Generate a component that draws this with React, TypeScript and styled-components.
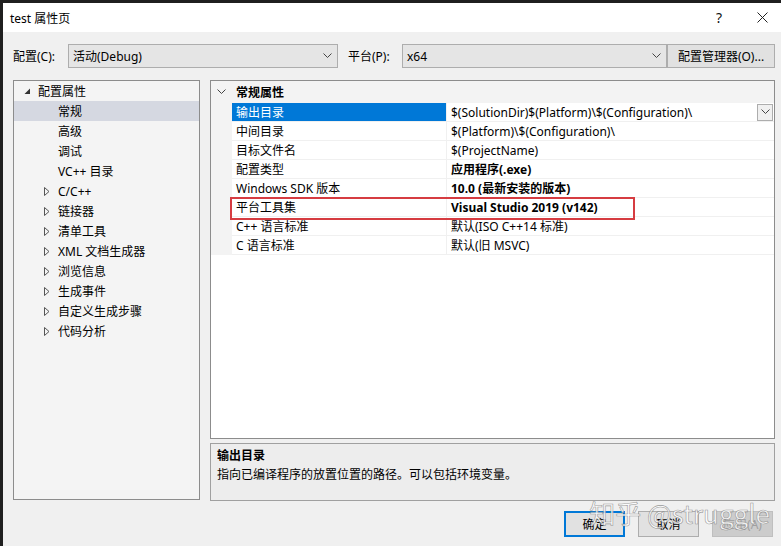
import React, { useState } from 'react'
import styled, { createGlobalStyle } from 'styled-components'

const GlobalStyle = createGlobalStyle`
  html, body {
    margin: 0;
    padding: 0;
    background: #1f1f1f;
  }
  body {
    font-family: 'Noto Sans', 'Noto Sans CJK SC', sans-serif;
    font-size: 12px;
    color: #000;
  }
`

const Window = styled.div`
  position: relative;
  margin: 3px 0 0 3px;
  height: 543px;
  display: flex;
  flex-direction: column;
  background: #f0f0f0;
  overflow: hidden;
`

const TitleBar = styled.div`
  height: 29px;
  background: #fff;
  display: flex;
  align-items: center;
  padding-left: 7px;
`

const Title = styled.span`
  flex: 1;
  font-size: 12px;
`

const TitleButton = styled.span<{ $width: number }>`
  width: ${({ $width }) => $width}px;
  display: flex;
  justify-content: center;
  font-size: 14px;
  color: #111;
`

const Body = styled.div`
  flex: 1;
  display: flex;
  flex-direction: column;
  padding: 12px 6px 0 10px;
`

const ConfigRow = styled.div`
  display: flex;
  align-items: center;
  height: 24px;
`

const Label = styled.span<{ $width: number; $indent?: number }>`
  width: ${({ $width }) => $width}px;
  padding-left: ${({ $indent }) => $indent || 0}px;
  flex-shrink: 0;
`

const Combo = styled.div<{ $width: number }>`
  width: ${({ $width }) => $width}px;
  height: 24px;
  box-sizing: border-box;
  border: 1px solid #adadad;
  background: #e5e5e5;
  display: flex;
  align-items: center;
  padding: 0 5px 0 4px;
  flex-shrink: 0;
`

const ComboText = styled.span`
  flex: 1;
`

const Chevron = styled.svg`
  width: 9px;
  height: 6px;
  flex-shrink: 0;
`

const Button = styled.button<{ $primary?: boolean; $disabled?: boolean }>`
  font: inherit;
  font-size: 12px;
  height: 24px;
  box-sizing: border-box;
  padding: 0 8px;
  background: ${({ $disabled }) => ($disabled ? '#cccccc' : '#e1e1e1')};
  color: ${({ $disabled }) => ($disabled ? '#a0a0a0' : '#000')};
  border: ${({ $primary, $disabled }) =>
    $primary ? '2px solid #0078d7' : $disabled ? '1px solid #bfbfbf' : '1px solid #adadad'};
  border-radius: 0;
`

const ManagerButton = styled(Button)`
  width: 110px;
`

const Main = styled.div`
  display: flex;
  gap: 10px;
  margin-top: 12px;
  height: 421px;
`

const TreePanel = styled.div`
  width: 187px;
  box-sizing: border-box;
  background: #f4f4f4;
  border: 1px solid #8c8c8c;
  height: 420px;
`

const TreeRow = styled.div<{ $selected?: boolean; $level: number }>`
  height: 20px;
  display: flex;
  align-items: center;
  padding-left: ${({ $level }) => ($level === 0 ? 10 : 30)}px;
  background: ${({ $selected }) => ($selected ? '#d5d8e1' : 'transparent')};
`

const Expander = styled.span`
  width: 14px;
  display: flex;
  align-items: center;
  flex-shrink: 0;
`

const RightColumn = styled.div`
  flex: 1;
  display: flex;
  flex-direction: column;
  gap: 4px;
`

const Grid = styled.div`
  position: relative;
  height: 359px;
  box-sizing: border-box;
  background: #fff;
  border: 1px solid #8c8c8c;
`

const CategoryRow = styled.div`
  height: 22px;
  display: flex;
  align-items: center;
  background: #f3f3f3;
  font-weight: bold;
`

const CategoryTitle = styled.span`
  padding-left: 4px;
`

const Gutter = styled.div`
  width: 21px;
  align-self: stretch;
  display: flex;
  align-items: center;
  justify-content: center;
  background: #f3f3f3;
  flex-shrink: 0;
`

const PropRow = styled.div`
  height: 19px;
  display: flex;
`

const NameCell = styled.div<{ $selected?: boolean }>`
  width: 214px;
  box-sizing: border-box;
  padding-left: 4px;
  display: flex;
  align-items: center;
  border-bottom: 1px solid #f0f0f0;
  background: ${({ $selected }) => ($selected ? '#0078d7' : '#fff')};
  color: ${({ $selected }) => ($selected ? '#fff' : '#000')};
`

const ValueCell = styled.div<{ $bold?: boolean }>`
  flex: 1;
  box-sizing: border-box;
  padding-left: 4px;
  display: flex;
  align-items: center;
  border-left: 1px solid #f0f0f0;
  border-bottom: 1px solid #f0f0f0;
  font-weight: ${({ $bold }) => ($bold ? 'bold' : 'normal')};
`

const ValueText = styled.span`
  flex: 1;
`

const DropButton = styled.span`
  width: 16px;
  height: 17px;
  box-sizing: border-box;
  border: 1px solid #adadad;
  background: #f0f0f0;
  display: flex;
  align-items: center;
  justify-content: center;
  margin-right: 1px;
`

// red annotation box drawn over the grid
const Highlight = styled.div`
  position: absolute;
  left: 19px;
  top: 116px;
  width: 405px;
  height: 23px;
  box-sizing: border-box;
  border: 2px solid #d63c41;
  pointer-events: none;
`

const Description = styled.div`
  height: 58px;
  box-sizing: border-box;
  border: 1px solid #a0a0a0;
  background: #ededed;
  padding: 2px 6px;
  line-height: 19px;
`

const DescTitle = styled.div`
  font-weight: bold;
`

const Footer = styled.div`
  display: flex;
  justify-content: flex-end;
  align-items: center;
  gap: 13px;
  padding: 10px 2px 0 0;
`

const FooterButton = styled(Button)`
  width: 61px;
  height: 26px;
`

const Watermark = styled.div`
  position: absolute;
  right: 11px;
  bottom: 15px;
  font-family: 'Noto Sans CJK SC', sans-serif;
  font-size: 26px;
  color: rgba(255, 255, 255, 0.8);
  -webkit-text-stroke: 0.6px rgba(120, 120, 120, 0.75);
  pointer-events: none;
`

const ChevronDown = () => (
  <Chevron viewBox="0 0 9 6">
    <path d="M0.5 0.5 L4.5 4.5 L8.5 0.5" fill="none" stroke="#444" strokeWidth="1" />
  </Chevron>
)

const treeItems: { label: string; level: number; expander?: 'open' | 'closed' }[] = [
  { label: '配置属性', level: 0, expander: 'open' },
  { label: '常规', level: 1 },
  { label: '高级', level: 1 },
  { label: '调试', level: 1 },
  { label: 'VC++ 目录', level: 1 },
  { label: 'C/C++', level: 1, expander: 'closed' },
  { label: '链接器', level: 1, expander: 'closed' },
  { label: '清单工具', level: 1, expander: 'closed' },
  { label: 'XML 文档生成器', level: 1, expander: 'closed' },
  { label: '浏览信息', level: 1, expander: 'closed' },
  { label: '生成事件', level: 1, expander: 'closed' },
  { label: '自定义生成步骤', level: 1, expander: 'closed' },
  { label: '代码分析', level: 1, expander: 'closed' },
]

const props: { name: string; value: string; bold?: boolean }[] = [
  { name: '输出目录', value: '$(SolutionDir)$(Platform)\\$(Configuration)\\' },
  { name: '中间目录', value: '$(Platform)\\$(Configuration)\\' },
  { name: '目标文件名', value: '$(ProjectName)' },
  { name: '配置类型', value: '应用程序(.exe)', bold: true },
  { name: 'Windows SDK 版本', value: '10.0 (最新安装的版本)', bold: true },
  { name: '平台工具集', value: 'Visual Studio 2019 (v142)', bold: true },
  { name: 'C++ 语言标准', value: '默认(ISO C++14 标准)' },
  { name: 'C 语言标准', value: '默认(旧 MSVC)' },
]

function TreeExpander({ kind }: { kind?: 'open' | 'closed' }) {
  if (!kind) return null
  if (kind === 'open') {
    return (
      <svg width="7" height="7" viewBox="0 0 7 7">
        <path d="M6 0.5 L6 6 L0.5 6 Z" fill="#333" />
      </svg>
    )
  }
  return (
    <svg width="6" height="9" viewBox="0 0 6 9">
      <path d="M0.5 0.5 L5 4.5 L0.5 8.5 Z" fill="none" stroke="#555" strokeWidth="1" />
    </svg>
  )
}

export default function App() {
  const [selectedProp, setSelectedProp] = useState(0)

  return (
    <>
      <GlobalStyle />
      <Window>
        <TitleBar>
          <Title>test 属性页</Title>
          <TitleButton $width={48}>?</TitleButton>
          <TitleButton $width={38}>
            <svg width="11" height="11" viewBox="0 0 11 11">
              <path d="M0.5 0.5 L10.5 10.5 M10.5 0.5 L0.5 10.5" stroke="#222" strokeWidth="1" />
            </svg>
          </TitleButton>
        </TitleBar>

        <Body>
          <ConfigRow>
            <Label $width={55}>配置(C):</Label>
            <Combo $width={270}>
              <ComboText>活动(Debug)</ComboText>
              <ChevronDown />
            </Combo>
            <Label $width={54} $indent={10}>
              平台(P):
            </Label>
            <Combo $width={265}>
              <ComboText>x64</ComboText>
              <ChevronDown />
            </Combo>
            <ManagerButton>配置管理器(O)...</ManagerButton>
          </ConfigRow>

          <Main>
            <TreePanel>
              {treeItems.map((item, i) => (
                <TreeRow key={i} $level={item.level} $selected={i === 1}>
                  <Expander>
                    <TreeExpander kind={item.expander} />
                  </Expander>
                  <span>{item.label}</span>
                </TreeRow>
              ))}
            </TreePanel>

            <RightColumn>
              <Grid>
                <CategoryRow>
                  <Gutter>
                    <ChevronDown />
                  </Gutter>
                  <CategoryTitle>常规属性</CategoryTitle>
                </CategoryRow>
                {props.map((p, i) => (
                  <PropRow key={p.name} onClick={() => setSelectedProp(i)}>
                    <Gutter />
                    <NameCell $selected={i === selectedProp}>{p.name}</NameCell>
                    <ValueCell $bold={p.bold}>
                      <ValueText>{p.value}</ValueText>
                      {i === selectedProp && (
                        <DropButton>
                          <ChevronDown />
                        </DropButton>
                      )}
                    </ValueCell>
                  </PropRow>
                ))}
                <Highlight />
              </Grid>
              <Description>
                <DescTitle>{props[selectedProp].name}</DescTitle>
                <div>指向已编译程序的放置位置的路径。可以包括环境变量。</div>
              </Description>
            </RightColumn>
          </Main>

          <Footer>
            <FooterButton $primary>确定</FooterButton>
            <FooterButton>取消</FooterButton>
            <FooterButton $disabled>应用(A)</FooterButton>
          </Footer>
        </Body>
        <Watermark>知乎 @struggle</Watermark>
      </Window>
    </>
  )
}
